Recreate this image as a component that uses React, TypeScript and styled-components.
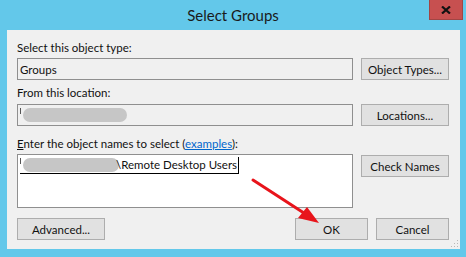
import styled, { createGlobalStyle } from "styled-components";

const GlobalStyle = createGlobalStyle`
  html, body {
    margin: 0;
    padding: 0;
    background: #63c8ea;
  }
  body {
    font-family: Lato, "Liberation Sans", sans-serif;
  }
`;

const Window = styled.div`
  position: relative;
  width: 466px;
  height: 257px;
  background: #63c8ea;
  display: flex;
  flex-direction: column;
`;

const TitleBar = styled.div`
  height: 30px;
  display: grid;
  grid-template-columns: 1fr auto 1fr;
  align-items: start;
`;

const Title = styled.div`
  grid-column: 2;
  font-size: 15px;
  line-height: 30px;
  color: #1a1a1a;
`;

const CloseButton = styled.div`
  grid-column: 3;
  justify-self: end;
  margin-right: 3px;
  width: 34px;
  height: 20px;
  box-sizing: border-box;
  background: #c75050;
  border: 1px solid #a14544;
  border-top: none;
  display: flex;
  align-items: center;
  justify-content: center;
`;

const Client = styled.div`
  margin: 0 6px 0 7px;
  height: 219px;
  background: #f0f0f0;
  box-sizing: border-box;
  padding: 10px 11px 0 10px;
  display: flex;
  flex-direction: column;
  font-size: 11.5px;
  color: #111;
  position: relative;
`;

const Label = styled.div<{ $top: number }>`
  height: 16px;
  line-height: 16px;
  margin-top: ${(p) => p.$top}px;
  white-space: nowrap;
`;

const Row = styled.div<{ $top: number }>`
  display: grid;
  grid-template-columns: 336px 88px;
  column-gap: 8px;
  align-items: start;
  margin-top: ${(p) => p.$top}px;
`;

const Field = styled.div<{ $white?: boolean; $height: number }>`
  height: ${(p) => p.$height}px;
  box-sizing: border-box;
  border: 1px solid #8f8f8f;
  background: ${(p) => (p.$white ? "#ffffff" : "#f0f0f0")};
  padding: 2px 2px;
  display: flex;
  align-items: ${(p) => (p.$white ? "flex-start" : "center")};
  overflow: hidden;
  white-space: nowrap;
`;

const Button = styled.div<{ $width?: number }>`
  width: ${(p) => (p.$width ? `${p.$width}px` : "auto")};
  height: 22px;
  box-sizing: border-box;
  border: 1px solid #adadad;
  background: #e1e1e1;
  display: flex;
  align-items: center;
  justify-content: center;
  white-space: nowrap;
`;

const CheckButton = styled(Button)`
  margin-top: 1px;
`;

const Blur = styled.span<{ $width: number }>`
  display: inline-block;
  width: ${(p) => p.$width}px;
  height: 14px;
  border-radius: 7px;
  background: #c6c6c6;
  flex: none;
`;

const Tick = styled.span`
  display: inline-block;
  width: 1px;
  height: 6px;
  background: #555;
  margin-right: 2px;
  align-self: flex-start;
  margin-top: 1px;
`;

const Name = styled.span`
  display: inline-flex;
  align-items: center;
  line-height: 16px;
  border-bottom: 1px solid #000;
  border-right: 1px solid #000;
  padding-right: 1px;
`;

const NameText = styled.span`
  margin-left: -3px;
`;

const Link = styled.span`
  color: #0066cc;
  text-decoration: underline;
`;

const Accel = styled.span`
  text-decoration: underline;
`;

const Footer = styled.div`
  display: flex;
  margin-top: 10px;
  gap: 8px;
`;

const Spacer = styled.div`
  flex: 1;
`;

const Grip = styled.svg`
  position: absolute;
  right: 1px;
  bottom: 1px;
`;

const Arrow = styled.svg`
  position: absolute;
  left: 0;
  top: 0;
  pointer-events: none;
`;

export default function App() {
  return (
    <Window>
      <GlobalStyle />
      <TitleBar>
        <Title>Select Groups</Title>
        <CloseButton>
          <svg width="10" height="8" viewBox="0 0 10 8">
            <path d="M1 0.5 L9 7.5 M9 0.5 L1 7.5" stroke="#111" strokeWidth="2.2" />
          </svg>
        </CloseButton>
      </TitleBar>
      <Client>
        <Label $top={0}>Select this object type:</Label>
        <Row $top={2}>
          <Field $height={22}>Groups</Field>
          <Button>Object Types...</Button>
        </Row>
        <Label $top={5}>From this location:</Label>
        <Row $top={3}>
          <Field $height={22}>
            <Tick />
            <Blur $width={104} />
          </Field>
          <Button>Locations...</Button>
        </Row>
        <Label $top={10}>
          <Accel>E</Accel>nter the object names to select (<Link>examples</Link>):
        </Label>
        <Row $top={2}>
          <Field $white $height={54}>
            <Name>
              <Tick />
              <Blur $width={96} />
              <NameText>\Remote Desktop Users</NameText>
            </Name>
          </Field>
          <CheckButton>Check Names</CheckButton>
        </Row>
        <Footer>
          <Button $width={88}>Advanced...</Button>
          <Spacer />
          <Button $width={73}>OK</Button>
          <Button $width={73}>Cancel</Button>
        </Footer>
        <Grip width="8" height="8" viewBox="0 0 8 8">
          <g fill="#b8b8b8">
            <rect x="6" y="0" width="1" height="1" />
            <rect x="3" y="3" width="1" height="1" />
            <rect x="6" y="3" width="1" height="1" />
            <rect x="0" y="6" width="1" height="1" />
            <rect x="3" y="6" width="1" height="1" />
            <rect x="6" y="6" width="1" height="1" />
          </g>
        </Grip>
      </Client>
      <Arrow width="466" height="257" viewBox="0 0 466 257">
        <line x1="253" y1="180" x2="307" y2="215" stroke="#e8141b" strokeWidth="3" strokeLinecap="round" />
        <polygon points="319,223 298,218 307,207" fill="#e8141b" />
      </Arrow>
    </Window>
  );
}
